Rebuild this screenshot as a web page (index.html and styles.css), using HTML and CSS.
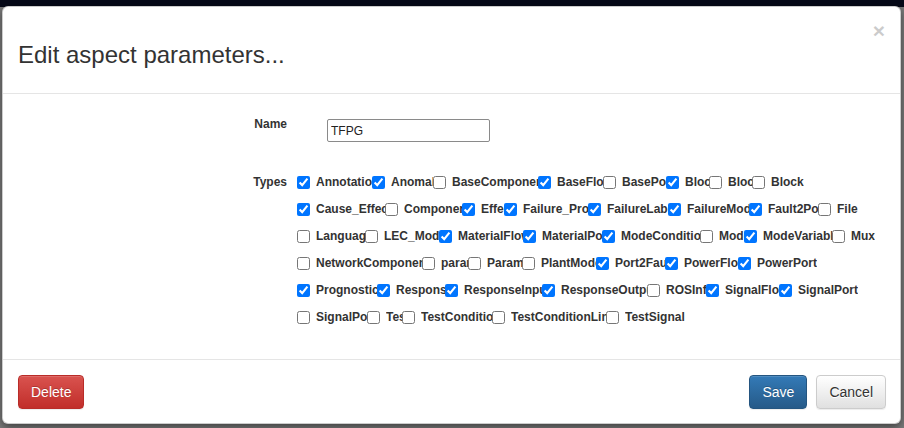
FILE: index.html
```html
<!DOCTYPE html>
<html lang="en">
<head>
<meta charset="utf-8">
<title>Edit aspect parameters</title>
<link rel="stylesheet" href="styles.css">
</head>
<body>
<div class="page">
  <div class="modal">
    <div class="modal-header">
      <button class="close" type="button">×</button>
      <h3 class="modal-title">Edit aspect parameters...</h3>
    </div>
    <div class="modal-body">
      <div class="field name-field">
        <label class="field-label">Name</label>
        <input class="text-input" type="text" value="TFPG">
      </div>
      <div class="field types-field">
        <div class="field-label types-label">Types</div>
        <div class="type-list">
          <div class="type-row">
            <label class="type-item" style="width:75px"><input type="checkbox" checked><span>Annotation</span></label>
            <label class="type-item" style="width:61px"><input type="checkbox" checked><span>Anomaly</span></label>
            <label class="type-item" style="width:105px"><input type="checkbox"><span>BaseComponent</span></label>
            <label class="type-item" style="width:65px"><input type="checkbox" checked><span>BaseFlow</span></label>
            <label class="type-item" style="width:63px"><input type="checkbox"><span>BasePort</span></label>
            <label class="type-item" style="width:43px"><input type="checkbox" checked><span>Block_Diagram</span></label>
            <label class="type-item" style="width:43px"><input type="checkbox"><span>Block_Library</span></label>
            <label class="type-item"><input type="checkbox"><span>Block</span></label>
          </div>
          <div class="type-row">
            <label class="type-item" style="width:88px"><input type="checkbox" checked><span>Cause_Effect</span></label>
            <label class="type-item" style="width:77px"><input type="checkbox"><span>Component</span></label>
            <label class="type-item" style="width:42px"><input type="checkbox" checked><span>Effect</span></label>
            <label class="type-item" style="width:84px"><input type="checkbox" checked><span>Failure_Propagation</span></label>
            <label class="type-item" style="width:80px"><input type="checkbox" checked><span>FailureLabel</span></label>
            <label class="type-item" style="width:81px"><input type="checkbox" checked><span>FailureMode</span></label>
            <label class="type-item" style="width:69px"><input type="checkbox" checked><span>Fault2Port</span></label>
            <label class="type-item"><input type="checkbox"><span>File</span></label>
          </div>
          <div class="type-row">
            <label class="type-item" style="width:68px"><input type="checkbox"><span>Language</span></label>
            <label class="type-item" style="width:74px"><input type="checkbox"><span>LEC_Model</span></label>
            <label class="type-item" style="width:84px"><input type="checkbox" checked><span>MaterialFlow</span></label>
            <label class="type-item" style="width:79px"><input type="checkbox" checked><span>MaterialPort</span></label>
            <label class="type-item" style="width:98px"><input type="checkbox" checked><span>ModeCondition</span></label>
            <label class="type-item" style="width:44px"><input type="checkbox"><span>ModeTransition</span></label>
            <label class="type-item" style="width:88px"><input type="checkbox" checked><span>ModeVariable</span></label>
            <label class="type-item"><input type="checkbox"><span>Mux</span></label>
          </div>
          <div class="type-row">
            <label class="type-item" style="width:125px"><input type="checkbox"><span>NetworkComponent</span></label>
            <label class="type-item" style="width:46px"><input type="checkbox"><span>param</span></label>
            <label class="type-item" style="width:54px"><input type="checkbox"><span>Parameter</span></label>
            <label class="type-item" style="width:74px"><input type="checkbox"><span>PlantModel</span></label>
            <label class="type-item" style="width:69px"><input type="checkbox" checked><span>Port2Fault</span></label>
            <label class="type-item" style="width:73px"><input type="checkbox" checked><span>PowerFlow</span></label>
            <label class="type-item"><input type="checkbox" checked><span>PowerPort</span></label>
          </div>
          <div class="type-row">
            <label class="type-item" style="width:80px"><input type="checkbox" checked><span>Prognostics</span></label>
            <label class="type-item" style="width:68px"><input type="checkbox" checked><span>Response</span></label>
            <label class="type-item" style="width:97px"><input type="checkbox" checked><span>ResponseInput</span></label>
            <label class="type-item" style="width:105px"><input type="checkbox" checked><span>ResponseOutput</span></label>
            <label class="type-item" style="width:59px"><input type="checkbox"><span>ROSInfo</span></label>
            <label class="type-item" style="width:73px"><input type="checkbox" checked><span>SignalFlow</span></label>
            <label class="type-item"><input type="checkbox" checked><span>SignalPort</span></label>
          </div>
          <div class="type-row">
            <label class="type-item" style="width:70px"><input type="checkbox"><span>SignalPortRef</span></label>
            <label class="type-item" style="width:35px"><input type="checkbox"><span>Test</span></label>
            <label class="type-item" style="width:90px"><input type="checkbox"><span>TestCondition</span></label>
            <label class="type-item" style="width:114px"><input type="checkbox"><span>TestConditionLink</span></label>
            <label class="type-item"><input type="checkbox"><span>TestSignal</span></label>
          </div>
        </div>
      </div>
    </div>
    <div class="modal-footer">
      <button class="btn btn-danger" type="button">Delete</button>
      <div class="footer-actions">
        <button class="btn btn-primary" type="button">Save</button>
        <button class="btn btn-default" type="button">Cancel</button>
      </div>
    </div>
  </div>
</div>
</body>
</html>
```
FILE: styles.css
```css
html, body {
  margin: 0;
  padding: 0;
}

body {
  width: 904px;
  height: 428px;
  overflow: hidden;
  background: linear-gradient(to bottom, #060918 0, #060918 7px, #7b7b7b 7px);
  font-family: "Liberation Sans", Arial, Helvetica, sans-serif;
  color: #333;
}

.page {
  padding: 6px 0 0 2px;
}

.modal {
  width: 899px;
  box-sizing: border-box;
  background: #fff;
  border: 1px solid rgba(0, 0, 0, 0.2);
  border-radius: 6px;
  box-shadow: 0 3px 9px rgba(0, 0, 0, 0.5);
}

.modal-header {
  padding: 15px;
  box-sizing: border-box;
  border-bottom: 1px solid #e5e5e5;
  height: 87px;
}

.close {
  float: right;
  margin-top: -2px;
  padding: 0;
  border: 0;
  background: transparent;
  font-family: "Liberation Sans", Arial, sans-serif;
  font-size: 21px;
  font-weight: 700;
  line-height: 1;
  color: #000;
  opacity: 0.2;
  cursor: pointer;
}

.modal-title {
  margin: 20px 0 10px;
  font-size: 24px;
  font-weight: 400;
  line-height: 26px;
  color: #333;
}

.modal-body {
  height: 265px;
  box-sizing: border-box;
  padding: 22px 15px 0;
}

.field {
  display: flex;
  align-items: flex-start;
  gap: 10px;
}

.field-label {
  width: 269px;
  flex: none;
  text-align: right;
  font-size: 12px;
  font-weight: 700;
  line-height: 17px;
  color: #333;
}

.text-input {
  margin: 3px 0 0 30px;
  width: 163px;
  height: 23px;
  box-sizing: border-box;
  padding: 1px 3px;
  border: 1px solid #8a8a8a;
  border-radius: 2px;
  font-family: "Liberation Sans", Arial, sans-serif;
  font-size: 12px;
  color: #222;
  background: #fff;
}

.types-field {
  margin-top: 27px;
}

.types-label {
  line-height: 27px;
}

.type-list {
  display: flex;
  flex-direction: column;
}

.type-row {
  display: flex;
  height: 27px;
}

.type-item {
  display: flex;
  align-items: center;
  flex: none;
  height: 27px;
  font-size: 12px;
  font-weight: 700;
  color: #333;
  overflow: hidden;
}

.type-item input {
  margin: 0;
  width: 13px;
  height: 13px;
  flex: none;
}

.type-item span {
  margin-left: 6px;
  flex: 1 1 auto;
  min-width: 0;
  overflow: hidden;
  white-space: nowrap;
  line-height: 27px;
}

.modal-footer {
  display: flex;
  justify-content: space-between;
  padding: 15px 14px 14px 15px;
  border-top: 1px solid #e5e5e5;
}

.footer-actions {
  display: flex;
  gap: 9px;
}

.btn {
  height: 34px;
  box-sizing: border-box;
  padding: 6px 12px;
  font-family: "Liberation Sans", Arial, sans-serif;
  font-size: 14px;
  line-height: 20px;
  border: 1px solid transparent;
  border-radius: 4px;
  box-shadow: inset 0 1px 0 rgba(255, 255, 255, 0.15), 0 1px 1px rgba(0, 0, 0, 0.075);
  cursor: pointer;
}

.btn-danger {
  color: #fff;
  background: linear-gradient(to bottom, #d9534f 0, #c12e2a 100%);
  border-color: #b92c28;
  text-shadow: 0 -1px 0 rgba(0, 0, 0, 0.2);
}

.btn-primary {
  color: #fff;
  background: linear-gradient(to bottom, #337ab7 0, #265a88 100%);
  border-color: #245580;
  text-shadow: 0 -1px 0 rgba(0, 0, 0, 0.2);
}

.btn-default {
  color: #333;
  background: linear-gradient(to bottom, #fff 0, #e0e0e0 100%);
  border-color: #ccc;
  text-shadow: 0 1px 0 #fff;
}
```
